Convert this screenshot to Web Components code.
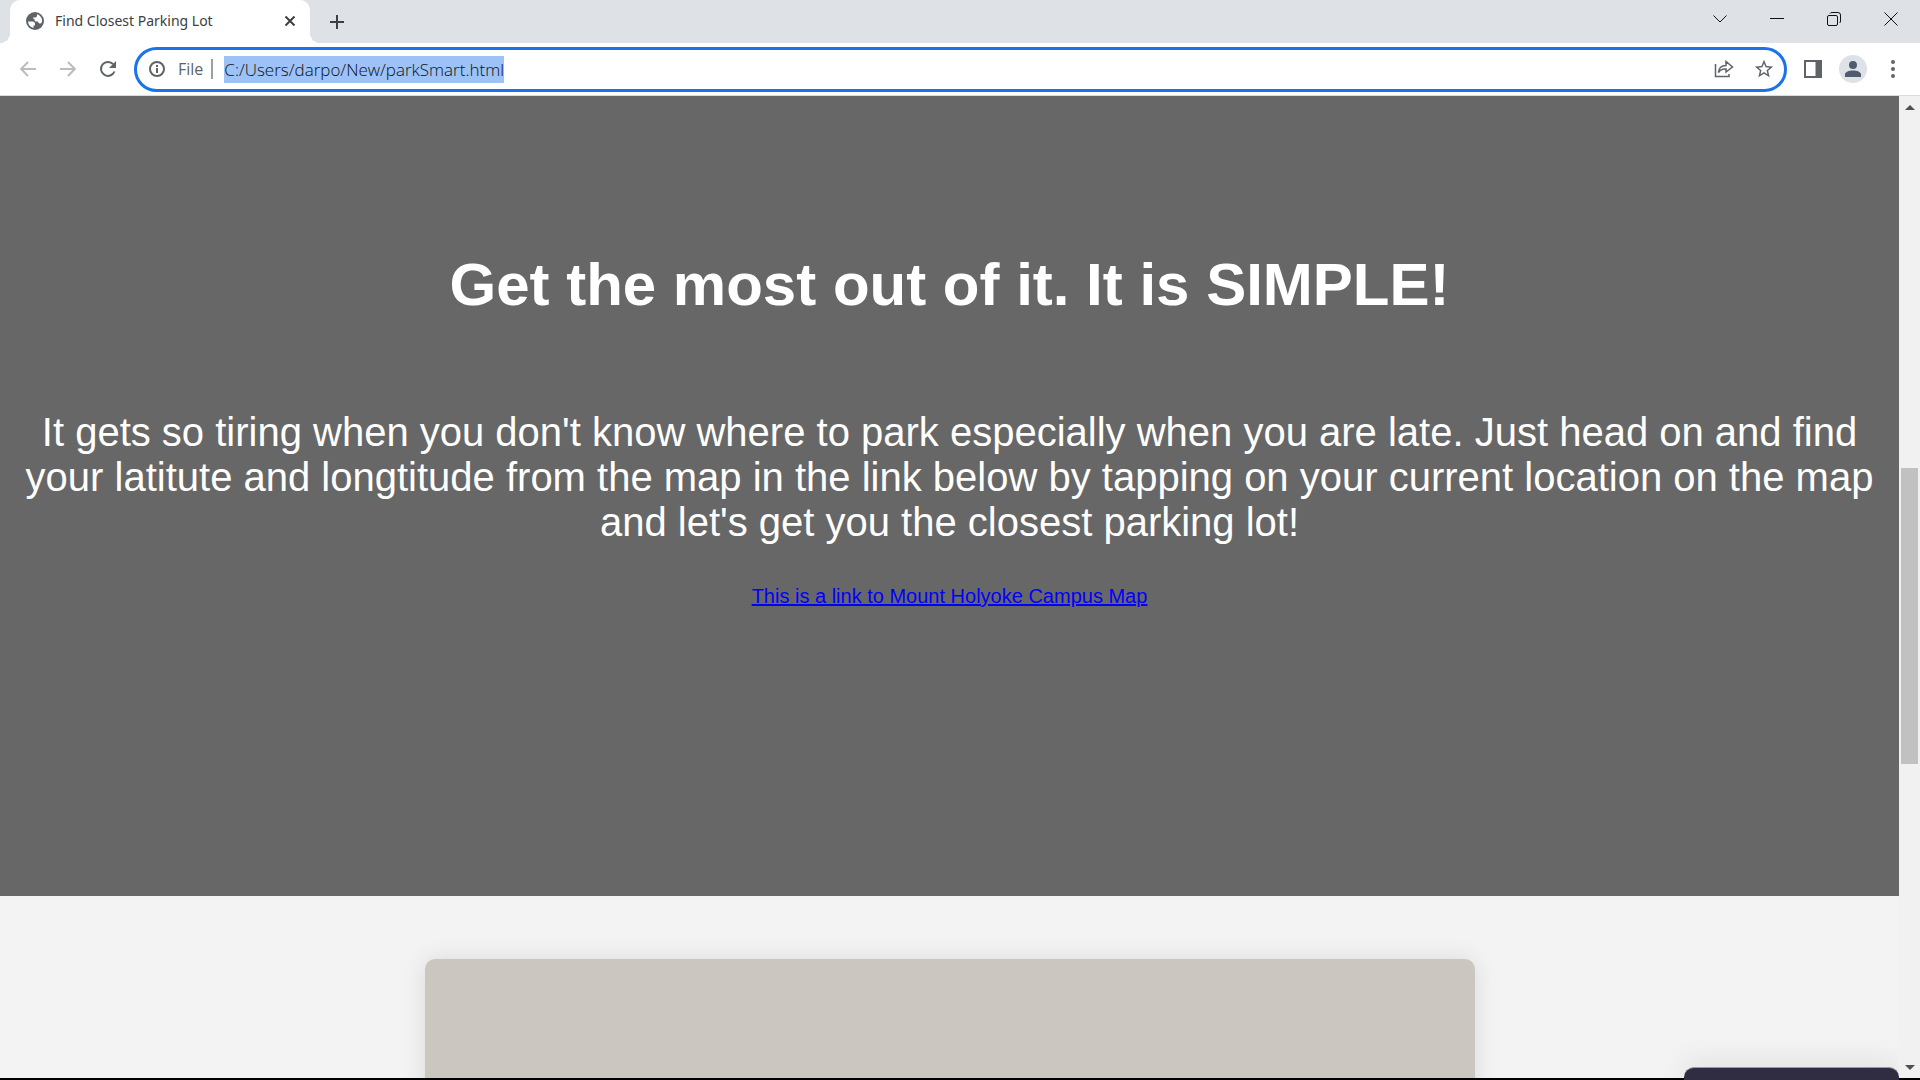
<!DOCTYPE html>
<html lang="en">
<head>
<meta charset="utf-8">
<title>Find Closest Parking Lot</title>
<style>
    html, body { height: 100%; margin: 0; }
    body { background: #000; font-family: "Liberation Sans", Arial, sans-serif; overflow: hidden; }
</style>
</head>
<body>
<browser-window>
    <tab-strip slot="top">Find Closest Parking Lot</tab-strip>
    <tool-bar slot="top" url="C:/Users/darpo/New/parkSmart.html"></tool-bar>
    <hero-section>
        <span slot="title">Get the most out of it. It is SIMPLE!</span>
        It gets so tiring when you don't know where to park especially when you are late. Just head on and find your latitute and longtitude from the map in the link below by tapping on your current location on the map and let's get you the closest parking lot!
        <span slot="link">This is a link to Mount Holyoke Campus Map</span>
    </hero-section>
    <map-card></map-card>
    <scroll-bar slot="side"></scroll-bar>
</browser-window>
<corner-popup></corner-popup>

<script>
class BrowserWindow extends HTMLElement {
    constructor() {
        super();
        this.attachShadow({ mode: "open" }).innerHTML = `
            <style>
                :host { display: flex; flex-direction: column; height: calc(100% - 2px); background: #f3f3f3; }
                .view { display: flex; flex: 1; min-height: 0; }
                main { flex: 1; min-width: 0; overflow: hidden; }
            </style>
            <slot name="top"></slot>
            <div class="view">
                <main><slot></slot></main>
                <slot name="side"></slot>
            </div>
        `;
    }
}

class TabStrip extends HTMLElement {
    constructor() {
        super();
        this.attachShadow({ mode: "open" }).innerHTML = `
            <style>
                :host {
                    display: flex;
                    height: 43px;
                    padding: 0 1px 0 10px;
                    background: #dee1e6;
                    color: #3c4043;
                    font: 14px/20px "Noto Sans", sans-serif;
                }
                .tab {
                    position: relative;
                    display: flex;
                    align-items: center;
                    box-sizing: border-box;
                    width: 300px;
                    padding: 0 12px 2px 15px;
                    background: #fff;
                    border-radius: 10px 10px 0 0;
                }
                /* flared feet on both sides of the tab */
                .tab::before, .tab::after {
                    content: "";
                    position: absolute;
                    bottom: 0;
                    width: 10px;
                    height: 10px;
                }
                .tab::before { right: 100%; background: radial-gradient(circle at 0 0, transparent 10px, #fff 10px); }
                .tab::after { left: 100%; background: radial-gradient(circle at 100% 0, transparent 10px, #fff 10px); }
                .title { flex: 1; margin-left: 10px; white-space: nowrap; }
                button {
                    all: unset;
                    display: flex;
                    align-items: center;
                    justify-content: center;
                }
                .close { width: 16px; height: 24px; }
                .add { width: 34px; margin-left: 10px; }
                .window { display: flex; margin-left: auto; height: 38px; }
                .window button { width: 57px; }
                svg { display: block; fill: none; stroke: currentColor; }
                .window svg { stroke: #111; }
            </style>
            <div class="tab">
                <svg width="20" height="20" viewBox="0 0 20 20"><circle cx="10" cy="10" r="9" fill="#5f6368" stroke="none"/><path d="M3 10.500h4.500q2.500 0 2.500 2.500v1.500H8.500V17Q3.500 15.500 3 10.500zM12 3.200q4 1.300 5 5.300V11q-1 2-2.500 1.500T13 10.500H11q-1.500 0-1.500-1.700T8 7.500V6.500h2.500Q12 6.500 12 3.200z" fill="#fff" stroke="none"/></svg>
                <span class="title"><slot></slot></span>
                <button class="close" aria-label="Close tab"><svg width="12" height="12" stroke-width="2"><path d="M1.500 1.500l9 9M10.500 1.500l-9 9"/></svg></button>
            </div>
            <button class="add" aria-label="New tab"><svg width="16" height="16" stroke-width="2"><path d="M8 1v14M1 8h14"/></svg></button>
            <div class="window">
                <button aria-label="Search tabs"><svg width="14" height="8"><path d="M.5.5L7 7l6.500-6.500"/></svg></button>
                <button aria-label="Minimize"><svg width="14" height="2"><path d="M0 .5h14"/></svg></button>
                <button aria-label="Restore"><svg width="14" height="14"><rect x=".5" y="3.500" width="10" height="10" rx="1.500"/><path d="M3 1.500Q3.500.5 5 .5h6Q13.500.5 13.500 3v6q0 1.500-1 2"/></svg></button>
                <button aria-label="Close"><svg width="14" height="14"><path d="M.5.5l13 13M13.500.5l-13 13"/></svg></button>
            </div>
        `;
    }
}

class ToolBar extends HTMLElement {
    constructor() {
        super();
        this.attachShadow({ mode: "open" }).innerHTML = `
            <style>
                :host {
                    display: flex;
                    align-items: center;
                    box-sizing: border-box;
                    height: 53px;
                    padding: 0 7px 0 8px;
                    background: #fff;
                    border-bottom: 1px solid #dadce0;
                    color: #5f6368;
                    font: 17px/27px "Open Sans", "Noto Sans", sans-serif;
                }
                button {
                    all: unset;
                    display: flex;
                    align-items: center;
                    justify-content: center;
                    width: 40px;
                    height: 40px;
                }
                button:disabled { color: #babcbe; }
                svg { display: block; fill: none; stroke: currentColor; stroke-width: 2; }
                .box {
                    display: flex;
                    align-items: center;
                    flex: 1;
                    box-sizing: border-box;
                    height: 45px;
                    margin: 0 6px;
                    padding-left: 12px;
                    border: 3px solid #1a73e8;
                    border-radius: 23px;
                }
                .info { width: 16px; }
                label { margin-left: 13px; padding-right: 8px; font-size: 16px; }
                .rule { width: 2px; height: 20px; margin-right: 11px; background: #9aa0a6; }
                input {
                    field-sizing: content;
                    height: 27px;
                    padding: 0;
                    border: 0;
                    outline: 0;
                    background: #9cc2f7;
                    color: #111;
                    font: inherit;
                    font-weight: 300;
                }
                .share { margin-left: auto; }
                .avatar { width: 28px; height: 28px; margin: 0 6px; border-radius: 50%; background: #dee1e6; }
            </style>
            <button disabled aria-label="Back"><svg width="16" height="16"><path d="M16 8H1.500M8 1L1.200 8 8 15"/></svg></button>
            <button disabled aria-label="Forward"><svg width="16" height="16"><path d="M0 8h14.500M8 1l6.800 7L8 15"/></svg></button>
            <button aria-label="Reload"><svg width="18" height="18"><path d="M15.500 11.500A7 7 0 1 1 14.200 4.200"/><path d="M17 1v7h-7z" fill="currentColor" stroke="none"/></svg></button>
            <div class="box">
                <button class="info" aria-label="View site information"><svg width="16" height="16"><circle cx="8" cy="8" r="7"/><path d="M8 7v5M8 4v2"/></svg></button>
                <label for="url">File</label>
                <span class="rule"></span>
                <input id="url" type="text" spellcheck="false" autocomplete="off">
                <button class="share" aria-label="Share"><svg width="20" height="18" style="stroke-width:1.500"><path d="M1.500 4v12.500H15V14M4.500 12.500Q5 5.500 12 5.500V1.500L18.500 7 12 12V9Q7 8.500 4.500 12.500z"/></svg></button>
                <button aria-label="Bookmark this tab"><svg width="22" height="22" viewBox="0 0 24 24"><path fill="currentColor" stroke="none" d="M22 9.240l-7.190-.62L12 2 9.190 8.630 2 9.240l5.460 4.730L5.820 21 12 17.270 18.180 21l-1.630-7.030L22 9.240zM12 15.400l-3.760 2.270 1-4.280-3.320-2.880 4.380-.38L12 6.100l1.710 4.040 4.380.38-3.320 2.880 1 4.280L12 15.400z"/></svg></button>
            </div>
            <button aria-label="Side panel"><svg width="18" height="18"><rect x="1" y="1" width="16" height="16"/><path d="M11.500 0h6.500v18h-6.500z" fill="currentColor" stroke="none"/></svg></button>
            <button class="avatar" aria-label="Profile"><svg width="16" height="16"><path d="M8 0a4 4 0 1 1 0 8 4 4 0 0 1 0-8M0 16v-2.500C0 11 4 9.500 8 9.500s8 1.500 8 4V16z" fill="#4f5b70" stroke="none"/></svg></button>
            <button aria-label="Menu"><svg width="4" height="18"><path d="M0 2a2 2 0 1 1 4 0 2 2 0 1 1-4 0M0 9a2 2 0 1 1 4 0 2 2 0 1 1-4 0M0 16a2 2 0 1 1 4 0 2 2 0 1 1-4 0" fill="currentColor" stroke="none"/></svg></button>
        `;
    }

    connectedCallback() {
        this.shadowRoot.querySelector("input").value = this.getAttribute("url");
    }
}

class HeroSection extends HTMLElement {
    constructor() {
        super();
        this.attachShadow({ mode: "open" }).innerHTML = `
            <style>
                :host {
                    display: block;
                    box-sizing: border-box;
                    min-height: 800px;
                    padding: 155px 20px 0;
                    background: #676767;
                    color: #fff;
                    text-align: center;
                }
                h1 { margin: 0 0 91px; font-size: 60px; line-height: 68px; }
                p { margin: 0 0 40px; font-size: 40px; line-height: 45px; }
                a { color: #00f; font-size: 20px; line-height: 23px; }
            </style>
            <h1><slot name="title"></slot></h1>
            <p><slot></slot></p>
            <a href="#"><slot name="link"></slot></a>
        `;
    }
}

class MapCard extends HTMLElement {
    constructor() {
        super();
        this.attachShadow({ mode: "open" }).innerHTML = `
            <style>
                :host { display: block; padding: 63px 20px; }
                section {
                    max-width: 1050px;
                    min-height: 500px;
                    margin: 0 auto;
                    background: #cbc6bf;
                    border-radius: 10px;
                    box-shadow: 0 0 25px rgba(0, 0, 0, .1);
                }
            </style>
            <section><slot></slot></section>
        `;
    }
}

class ScrollBar extends HTMLElement {
    constructor() {
        super();
        this.attachShadow({ mode: "open" }).innerHTML = `
            <style>
                :host { display: flex; flex-direction: column; width: 21px; background: #f1f1f1; }
                button {
                    all: unset;
                    display: flex;
                    align-items: center;
                    justify-content: center;
                    height: 22px;
                }
                svg { fill: #505050; }
                .before { flex: 350; }
                .thumb { flex: 296; margin: 0 2px; background: #c1c1c1; }
                .after { flex: 292; }
            </style>
            <button aria-label="Scroll up"><svg width="10" height="5"><path d="M0 5l5-5 5 5z"/></svg></button>
            <div class="before"></div>
            <div class="thumb"></div>
            <div class="after"></div>
            <button aria-label="Scroll down"><svg width="10" height="5"><path d="M0 0l5 5 5-5z"/></svg></button>
        `;
    }
}

// Top edge of a window that peeks in over the bottom right corner
class CornerPopup extends HTMLElement {
    constructor() {
        super();
        this.attachShadow({ mode: "open" }).innerHTML = `
            <style>
                :host {
                    position: absolute;
                    right: 21px;
                    bottom: 0;
                    box-sizing: border-box;
                    width: 215px;
                    height: 13px;
                    background: #302c42;
                    border-top: 1px solid #999;
                    border-radius: 10px 10px 0 0;
                    box-shadow: 0 0 30px rgba(0, 0, 0, .15);
                    clip-path: inset(-30px 0 0 -50px);
                }
            </style>
        `;
    }
}

customElements.define("browser-window", BrowserWindow);
customElements.define("tab-strip", TabStrip);
customElements.define("tool-bar", ToolBar);
customElements.define("hero-section", HeroSection);
customElements.define("map-card", MapCard);
customElements.define("scroll-bar", ScrollBar);
customElements.define("corner-popup", CornerPopup);
</script>
</body>
</html>
